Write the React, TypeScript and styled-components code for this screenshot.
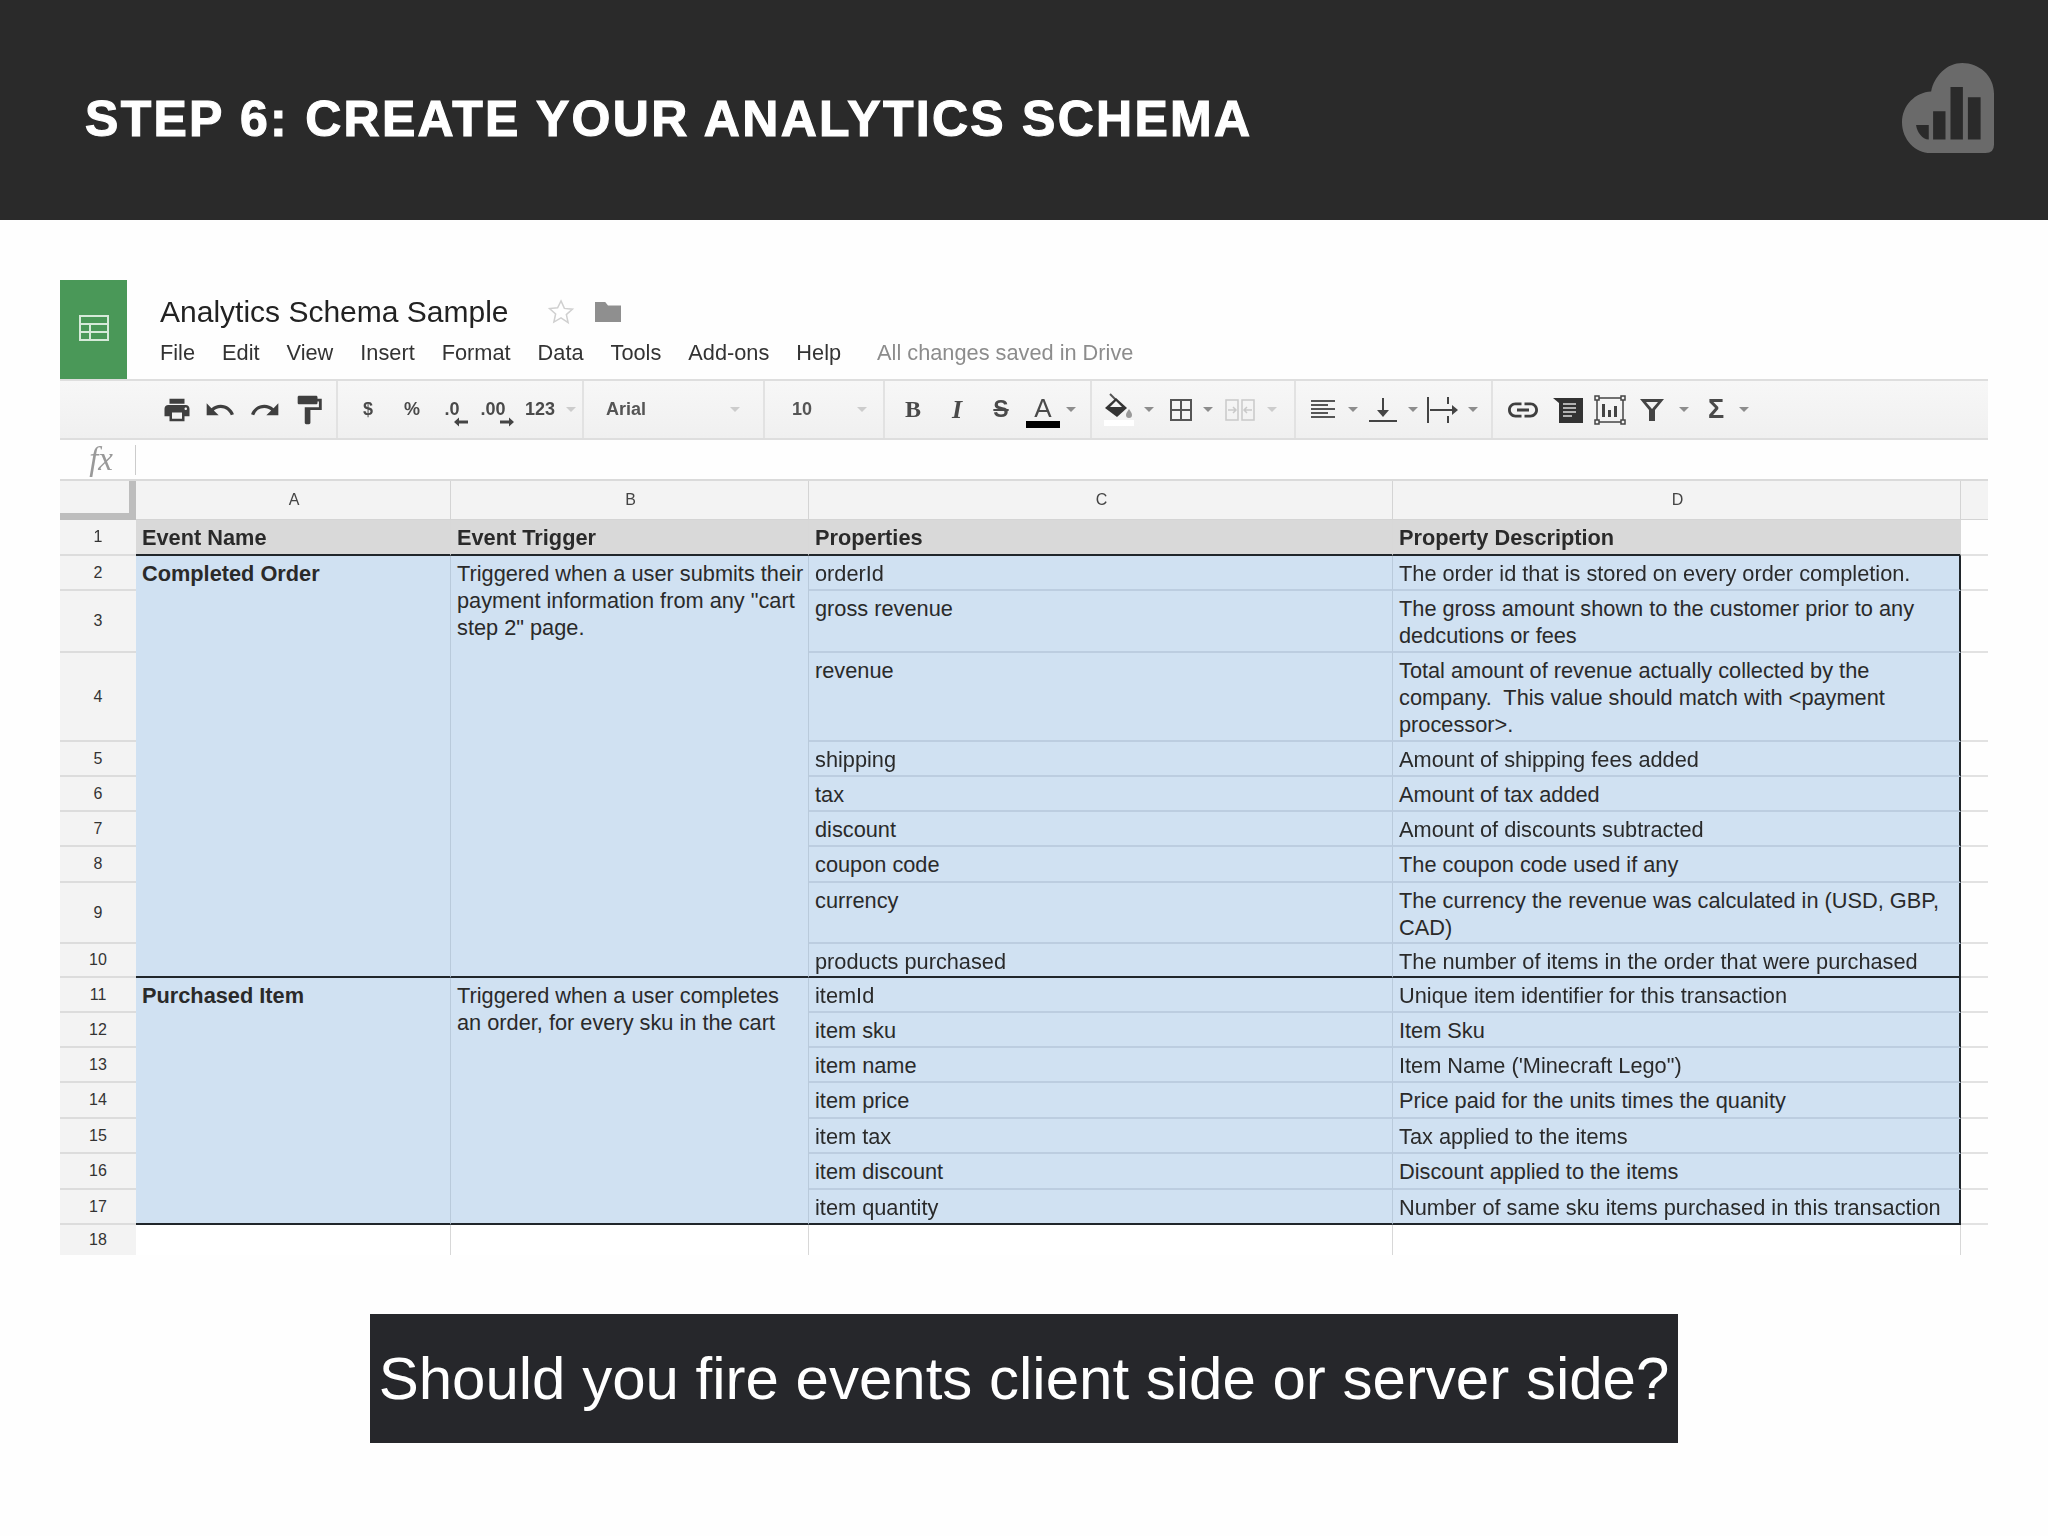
import React from "react";
import styled, { createGlobalStyle } from "styled-components";
import { MdPrint, MdUndo, MdRedo, MdFormatPaint, MdLink } from "react-icons/md";

const GlobalStyle = createGlobalStyle`
  html, body {
    margin: 0;
    padding: 0;
    background: #fefefe;
    font-family: "Liberation Sans", Arial, sans-serif;
  }
`;

const Page = styled.div`
  width: 2048px;
  height: 1536px;
  overflow: hidden;
  display: flex;
  flex-direction: column;
`;

const SlideHeader = styled.header`
  height: 220px;
  flex: none;
  box-sizing: border-box;
  padding: 0 54px 0 85px;
  background: #2a2a2a;
  display: flex;
  align-items: center;
  justify-content: space-between;
`;

const SlideTitle = styled.h1`
  margin: 18px 0 0;
  color: #fff;
  font-size: 50px;
  font-weight: 700;
  letter-spacing: 2.28px;
  -webkit-text-stroke: 1.1px #fff;
  white-space: nowrap;
`;

const LogoSlot = styled.div`
  display: flex;
  margin-bottom: 4px;
`;

const Sheet = styled.section`
  margin: 60px 60px 0;
  width: 1928px;
  filter: blur(0.35px);
  color: #222;
`;

const DocBar = styled.div`
  height: 99px;
  display: flex;
`;

const AppBadge = styled.div`
  width: 67px;
  flex: none;
  box-sizing: border-box;
  padding-bottom: 4px;
  background: #4a9858;
  display: flex;
  align-items: center;
  justify-content: center;
`;

const DocInfo = styled.div`
  padding: 11px 0 0 33px;
`;

const DocTitleRow = styled.div`
  height: 42px;
  display: flex;
  align-items: center;
`;

const DocTitle = styled.div`
  font-size: 30px;
  color: #222;
  width: 387px;
  white-space: nowrap;
`;

const FolderSlot = styled.div`
  margin-left: 20px;
  display: flex;
`;

const MenuRow = styled.nav`
  margin-top: 7px;
  display: flex;
  align-items: center;
  font-size: 21.75px;
  color: #333;
`;

const MenuItem = styled.span`
  margin-right: 27px;
`;

const SaveNote = styled.span`
  margin-left: 9px;
  color: #8c8c8c;
`;

const Toolbar = styled.div`
  height: 61px;
  box-sizing: border-box;
  display: flex;
  background: linear-gradient(#f7f7f7, #f0f0f0);
  border-top: 2px solid #dedede;
  border-bottom: 2px solid #dedede;
`;

const ToolGroup = styled.div<{ $w?: number; $pad?: number; $last?: boolean }>`
  ${(p) => (p.$w ? `width: ${p.$w}px; flex: none;` : "flex: 1;")}
  box-sizing: border-box;
  padding-left: ${(p) => p.$pad || 0}px;
  display: flex;
  align-items: center;
  border-right: ${(p) => (p.$last ? "none" : "2px solid #e2e2e2")};
`;

const Tool = styled.div<{ $w: number; $muted?: boolean }>`
  position: relative;
  width: ${(p) => p.$w}px;
  height: 40px;
  flex: none;
  display: flex;
  align-items: center;
  justify-content: center;
  font-size: 18px;
  font-weight: 700;
  color: ${(p) => (p.$muted ? "#bbb" : "#4a4a4a")};
  svg {
    display: block;
  }
`;

const Caret = styled.i<{ $light?: boolean }>`
  flex: none;
  width: 0;
  height: 0;
  border-left: 5px solid transparent;
  border-right: 5px solid transparent;
  border-top: 5px solid ${(p) => (p.$light ? "#ccc" : "#8d8d8d")};
`;

const ToolSelect = styled.div<{ $left: number; $right: number }>`
  flex: 1;
  display: flex;
  align-items: center;
  justify-content: space-between;
  padding: 0 ${(p) => p.$right}px 0 ${(p) => p.$left}px;
  font-size: 18px;
  font-weight: 700;
  color: #555;
`;

const TinyArrow = styled.svg`
  position: absolute;
  bottom: 3px;
  right: 2px;
`;

const BoldGlyph = styled.span`
  font-family: "Liberation Serif", serif;
  font-size: 24px;
`;

const ItalicGlyph = styled.span`
  font-family: "Liberation Serif", serif;
  font-style: italic;
  font-size: 26px;
`;

const StruckGlyph = styled.span`
  font-size: 23px;
  text-decoration: line-through;
`;

const ColorGlyph = styled.span`
  font-size: 26px;
  font-weight: 400;
  line-height: 26px;
  border-bottom: 7px solid #000;
  padding: 0 8px;
  margin-top: 4px;
`;

const SigmaGlyph = styled.span`
  font-size: 27px;
`;

const FormulaBar = styled.div`
  height: 41px;
  display: flex;
  align-items: center;
  border-bottom: 2px solid #dadada;
  box-sizing: border-box;
`;

const FxLabel = styled.div`
  width: 76px;
  height: 30px;
  box-sizing: border-box;
  padding-right: 22px;
  text-align: right;
  border-right: 1px solid #ccc;
  font-family: "Liberation Serif", serif;
  font-style: italic;
  font-size: 33px;
  line-height: 28px;
  color: #999;
`;

const Grid = styled.div<{ $rows: number[] }>`
  display: grid;
  grid-template-columns: 76px 315px 358px 584px 568px 27px;
  grid-template-rows: ${(p) => p.$rows.map((r) => `${r}px`).join(" ")};
`;

const Corner = styled.div`
  background: #f3f3f3;
  border-right: 7px solid #bdbdbd;
  border-bottom: 7px solid #bdbdbd;
  box-sizing: border-box;
`;

const ColumnHead = styled.div<{ $blank?: boolean }>`
  background: #f3f3f3;
  border-right: ${(p) => (p.$blank ? "none" : "1px solid #d4d4d4")};
  border-bottom: 1px solid #d4d4d4;
  display: flex;
  align-items: center;
  justify-content: center;
  padding-left: 2px;
  font-size: 16px;
  color: #444;
`;

const RowNumber = styled.div<{ $open?: boolean }>`
  background: #f3f3f3;
  border-bottom: ${(p) => (p.$open ? "none" : "2px solid #dcdcdc")};
  box-sizing: border-box;
  display: flex;
  align-items: center;
  justify-content: center;
  font-size: 16px;
  color: #333;
`;

const Cell = styled.div<{
  $kind: "head" | "data" | "blank";
  $span?: number;
  $bold?: boolean;
  $edge?: boolean;
  $closing?: boolean;
}>`
  grid-row: span ${(p) => p.$span || 1};
  box-sizing: border-box;
  padding: 5px 2px 0 6px;
  font-size: 21.75px;
  line-height: 26.8px;
  white-space: pre-wrap;
  overflow: hidden;
  font-weight: ${(p) => (p.$bold ? 700 : 400)};
  color: #2a2a2a;
  background: ${(p) =>
    p.$kind === "head" ? "#d9d9d9" : p.$kind === "data" ? "#d0e1f2" : "#fff"};
  border-right: ${(p) =>
    p.$edge
      ? "2px solid #20262b"
      : p.$kind === "data"
        ? "1px solid #b9cadb"
        : "1px solid #d8d8d8"};
  border-bottom: ${(p) =>
    p.$closing
      ? "2px solid #20262b"
      : p.$kind === "data"
        ? "2px solid #bccde0"
        : "none"};
`;

const Gutter = styled.div`
  border-bottom: 2px solid #e2e2e2;
  box-sizing: border-box;
`;

const Callout = styled.div`
  margin: 59px auto 0;
  width: 1308px;
  height: 129px;
  flex: none;
  background: #26272b;
  color: #fff;
  display: flex;
  align-items: center;
  justify-content: center;
  font-size: 60px;
  white-space: nowrap;
`;

const heights = [36, 35, 62, 89, 35, 35, 35, 36, 61, 34, 35, 35, 35, 36, 35, 36, 35, 30];

const rows: [string, string][] = [
  ["orderId", "The order id that is stored on every order completion."],
  ["gross revenue", "The gross amount shown to the customer prior to any\ndedcutions or fees"],
  ["revenue", "Total amount of revenue actually collected by the\ncompany.  This value should match with <payment\nprocessor>."],
  ["shipping", "Amount of shipping fees added"],
  ["tax", "Amount of tax added"],
  ["discount", "Amount of discounts subtracted"],
  ["coupon code", "The coupon code used if any"],
  ["currency", "The currency the revenue was calculated in (USD, GBP,\nCAD)"],
  ["products purchased", "The number of items in the order that were purchased"],
  ["itemId", "Unique item identifier for this transaction"],
  ["item sku", "Item Sku"],
  ["item name", "Item Name ('Minecraft Lego\")"],
  ["item price", "Price paid for the units times the quanity"],
  ["item tax", "Tax applied to the items"],
  ["item discount", "Discount applied to the items"],
  ["item quantity", "Number of same sku items purchased in this transaction"],
];

const groupStart: Record<number, { name: string; trigger: string; span: number }> = {
  2: {
    name: "Completed Order",
    trigger: "Triggered when a user submits their\npayment information from any \"cart\nstep 2\" page.",
    span: 9,
  },
  11: {
    name: "Purchased Item",
    trigger: "Triggered when a user completes\nan order, for every sku in the cart",
    span: 7,
  },
};

const closingRows = [10, 17];

const menu = ["File", "Edit", "View", "Insert", "Format", "Data", "Tools", "Add-ons", "Help"];

const SheetLogo = () => (
  <svg width="30" height="26" viewBox="0 0 30 26" fill="none" stroke="#d6ead9" strokeWidth="2">
    <rect x="1" y="1" width="28" height="24" />
    <path d="M1 9h28M1 17h28M11 9v16" />
  </svg>
);

const BrandLogo = () => (
  <svg width="92" height="90" viewBox="125 68 275 269">
    <path
      d="M210 337H375Q400 337 400 312V160C400 105 355 68 305 68C260 68 222 105 212 153C165 155 125 195 125 245C125 297 165 337 210 337Z"
      fill="#6a6a6a"
    />
    <path d="M167 253H205V297C185 295 170 275 167 253Z" fill="#2a2a2a" />
    <path d="M218 212h37v85h-37zM270 140h37v157h-37zM322 170h38v127h-38z" fill="#2a2a2a" />
  </svg>
);

const StarIcon = () => (
  <svg width="28" height="28" viewBox="0 0 24 24" fill="#fff" stroke="#d0d0d0" strokeWidth="1.3">
    <path d="M12 2.5l2.9 6.4 6.9.7-5.2 4.6 1.5 6.9L12 17.1l-6.1 3.5 1.5-6.9-5.2-4.6 6.9-.7z" />
  </svg>
);

const FolderIcon = () => (
  <svg width="26" height="22" viewBox="0 0 28 24" preserveAspectRatio="none">
    <path d="M0 1h11l3 4h14v18H0z" fill="#8f8f8f" />
  </svg>
);

const LeftArrow = () => (
  <TinyArrow width="14" height="10" viewBox="0 0 14 10">
    <path d="M0 5l5-4.5v3h9v3H5v3z" fill="#444" />
  </TinyArrow>
);

const RightArrow = () => (
  <TinyArrow width="14" height="10" viewBox="0 0 14 10">
    <path d="M14 5L9 .5v3H0v3h9v3z" fill="#444" />
  </TinyArrow>
);

const FillIcon = () => (
  <svg width="30" height="34" viewBox="0 0 30 34">
    <path d="M6 1l13 13" stroke="#555" strokeWidth="2" />
    <path d="M12 5L23 15 13 24 1 15z" fill="#333" />
    <path d="M12 8l6 6H6z" fill="#f3f3f3" />
    <path d="M25 16c2 3 3 4 3 6a3 3 0 01-6 0c0-2 1-3 3-6z" fill="#999" />
    <rect x="0" y="27" width="30" height="6" fill="#fff" />
  </svg>
);

const BordersIcon = () => (
  <svg width="22" height="22" viewBox="0 0 22 22" fill="none" stroke="#555" strokeWidth="2">
    <rect x="1" y="1" width="20" height="20" />
    <path d="M11 1v20M1 11h20" />
  </svg>
);

const MergeIcon = () => (
  <svg width="30" height="22" viewBox="0 0 30 22" fill="none" stroke="#c9c9c9" strokeWidth="1.5">
    <rect x="1" y="1" width="12" height="20" />
    <rect x="17" y="1" width="12" height="20" />
    <path d="M3 11h7M8 8l3 3-3 3M27 11h-7M22 8l-3 3 3 3" />
  </svg>
);

const AlignIcon = () => (
  <svg width="24" height="20" viewBox="0 0 24 20" stroke="#555" strokeWidth="2">
    <path d="M0 1h24M0 5h17M0 9h24M0 13h17M0 17h24" />
  </svg>
);

const ValignIcon = () => (
  <svg width="28" height="26" viewBox="0 0 28 26" fill="none" stroke="#444" strokeWidth="2">
    <path d="M14 1v16M0 24h28" />
    <path d="M8 13h12l-6 7z" fill="#444" stroke="none" />
  </svg>
);

const WrapIcon = () => (
  <svg width="32" height="26" viewBox="0 0 32 26" fill="none" stroke="#444" strokeWidth="2">
    <path d="M1 0v26M21 0v7M21 19v7M3 13h24" />
    <path d="M25 8l6 5-6 5z" fill="#444" stroke="none" />
  </svg>
);

const CommentIcon = () => (
  <svg width="30" height="26" viewBox="0 0 30 26">
    <path d="M0 1h30v25H6V6z" fill="#333" />
    <path d="M10 7h13M10 11h13M10 15h13M10 19h9" stroke="#ddd" strokeWidth="1.6" />
  </svg>
);

const ChartIcon = () => (
  <svg width="32" height="30" viewBox="0 0 32 30" fill="none" stroke="#444" strokeWidth="1.5">
    <rect x="3" y="3" width="26" height="24" />
    <rect x="1" y="1" width="4" height="4" fill="#f3f3f3" />
    <rect x="27" y="1" width="4" height="4" fill="#f3f3f3" />
    <rect x="1" y="25" width="4" height="4" fill="#f3f3f3" />
    <rect x="27" y="25" width="4" height="4" fill="#f3f3f3" />
    <path d="M8 9h3v13H8zM14 15h3v7h-3zM20 11h3v11h-3z" fill="#444" stroke="none" />
  </svg>
);

const FilterIcon = () => (
  <svg width="24" height="24" viewBox="0 0 24 24">
    <path d="M0 1h24l-9 11v11H9V12z" fill="#444" />
    <path d="M6 4h12l-6 7z" fill="#f3f3f3" />
  </svg>
);

const App: React.FC = () => {
  return (
    <Page>
      <GlobalStyle />
      <SlideHeader>
        <SlideTitle>STEP 6: CREATE YOUR ANALYTICS SCHEMA</SlideTitle>
        <LogoSlot>
          <BrandLogo />
        </LogoSlot>
      </SlideHeader>

      <Sheet>
        <DocBar>
          <AppBadge>
            <SheetLogo />
          </AppBadge>
          <DocInfo>
            <DocTitleRow>
              <DocTitle>Analytics Schema Sample</DocTitle>
              <StarIcon />
              <FolderSlot>
                <FolderIcon />
              </FolderSlot>
            </DocTitleRow>
            <MenuRow>
              {menu.map((m) => (
                <MenuItem key={m}>{m}</MenuItem>
              ))}
              <SaveNote>All changes saved in Drive</SaveNote>
            </MenuRow>
          </DocInfo>
        </DocBar>

        <Toolbar>
          <ToolGroup $w={278} $pad={97}>
            <Tool $w={40}>
              <MdPrint size={30} color="#3f3f3f" />
            </Tool>
            <Tool $w={46}>
              <MdUndo size={32} color="#3f3f3f" />
            </Tool>
            <Tool $w={44}>
              <MdRedo size={32} color="#3f3f3f" />
            </Tool>
            <Tool $w={44}>
              <MdFormatPaint size={34} color="#3f3f3f" />
            </Tool>
          </ToolGroup>
          <ToolGroup $w={246} $pad={8}>
            <Tool $w={44}>$</Tool>
            <Tool $w={44}>%</Tool>
            <Tool $w={36}>
              .0
              <LeftArrow />
            </Tool>
            <Tool $w={46}>
              .00
              <RightArrow />
            </Tool>
            <Tool $w={48}>123</Tool>
            <Tool $w={14}>
              <Caret $light />
            </Tool>
          </ToolGroup>
          <ToolGroup $w={181}>
            <ToolSelect $left={22} $right={23}>
              Arial
              <Caret $light />
            </ToolSelect>
          </ToolGroup>
          <ToolGroup $w={120}>
            <ToolSelect $left={27} $right={16}>
              10
              <Caret $light />
            </ToolSelect>
          </ToolGroup>
          <ToolGroup $w={207} $pad={6}>
            <Tool $w={44}>
              <BoldGlyph>B</BoldGlyph>
            </Tool>
            <Tool $w={44}>
              <ItalicGlyph>I</ItalicGlyph>
            </Tool>
            <Tool $w={44}>
              <StruckGlyph>S</StruckGlyph>
            </Tool>
            <Tool $w={40}>
              <ColorGlyph>A</ColorGlyph>
            </Tool>
            <Tool $w={16}>
              <Caret />
            </Tool>
          </ToolGroup>
          <ToolGroup $w={204} $pad={6}>
            <Tool $w={42}>
              <FillIcon />
            </Tool>
            <Tool $w={18}>
              <Caret />
            </Tool>
            <Tool $w={46}>
              <BordersIcon />
            </Tool>
            <Tool $w={8}>
              <Caret />
            </Tool>
            <Tool $w={56}>
              <MergeIcon />
            </Tool>
            <Tool $w={8}>
              <Caret $light />
            </Tool>
          </ToolGroup>
          <ToolGroup $w={197}>
            <Tool $w={54}>
              <AlignIcon />
            </Tool>
            <Tool $w={6}>
              <Caret />
            </Tool>
            <Tool $w={54}>
              <ValignIcon />
            </Tool>
            <Tool $w={6}>
              <Caret />
            </Tool>
            <Tool $w={54}>
              <WrapIcon />
            </Tool>
            <Tool $w={6}>
              <Caret />
            </Tool>
          </ToolGroup>
          <ToolGroup $last>
            <Tool $w={60}>
              <MdLink size={36} color="#3f3f3f" />
            </Tool>
            <Tool $w={30}>
              <CommentIcon />
            </Tool>
            <Tool $w={54}>
              <ChartIcon />
            </Tool>
            <Tool $w={30}>
              <FilterIcon />
            </Tool>
            <Tool $w={34}>
              <Caret />
            </Tool>
            <Tool $w={30}>
              <SigmaGlyph>Σ</SigmaGlyph>
            </Tool>
            <Tool $w={26}>
              <Caret />
            </Tool>
          </ToolGroup>
        </Toolbar>

        <FormulaBar>
          <FxLabel>fx</FxLabel>
        </FormulaBar>

        <Grid $rows={[39, ...heights]}>
          <Corner />
          <ColumnHead>A</ColumnHead>
          <ColumnHead>B</ColumnHead>
          <ColumnHead>C</ColumnHead>
          <ColumnHead>D</ColumnHead>
          <ColumnHead $blank />

          <RowNumber>1</RowNumber>
          <Cell $kind="head" $bold $closing>Event Name</Cell>
          <Cell $kind="head" $bold $closing>Event Trigger</Cell>
          <Cell $kind="head" $bold $closing>Properties</Cell>
          <Cell $kind="head" $bold $closing>Property Description</Cell>
          <Gutter />

          {rows.map(([property, description], i) => {
            const n = i + 2;
            const group = groupStart[n];
            const closing = closingRows.includes(n);
            return (
              <React.Fragment key={n}>
                <RowNumber>{n}</RowNumber>
                {group && (
                  <>
                    <Cell $kind="data" $bold $span={group.span} $closing>
                      {group.name}
                    </Cell>
                    <Cell $kind="data" $span={group.span} $closing>
                      {group.trigger}
                    </Cell>
                  </>
                )}
                <Cell $kind="data" $closing={closing}>{property}</Cell>
                <Cell $kind="data" $edge $closing={closing}>{description}</Cell>
                <Gutter />
              </React.Fragment>
            );
          })}

          <RowNumber $open>18</RowNumber>
          <Cell $kind="blank" />
          <Cell $kind="blank" />
          <Cell $kind="blank" />
          <Cell $kind="blank" />
          <div />
        </Grid>
      </Sheet>

      <Callout>Should you fire events client side or server side?</Callout>
    </Page>
  );
};

export default App;
